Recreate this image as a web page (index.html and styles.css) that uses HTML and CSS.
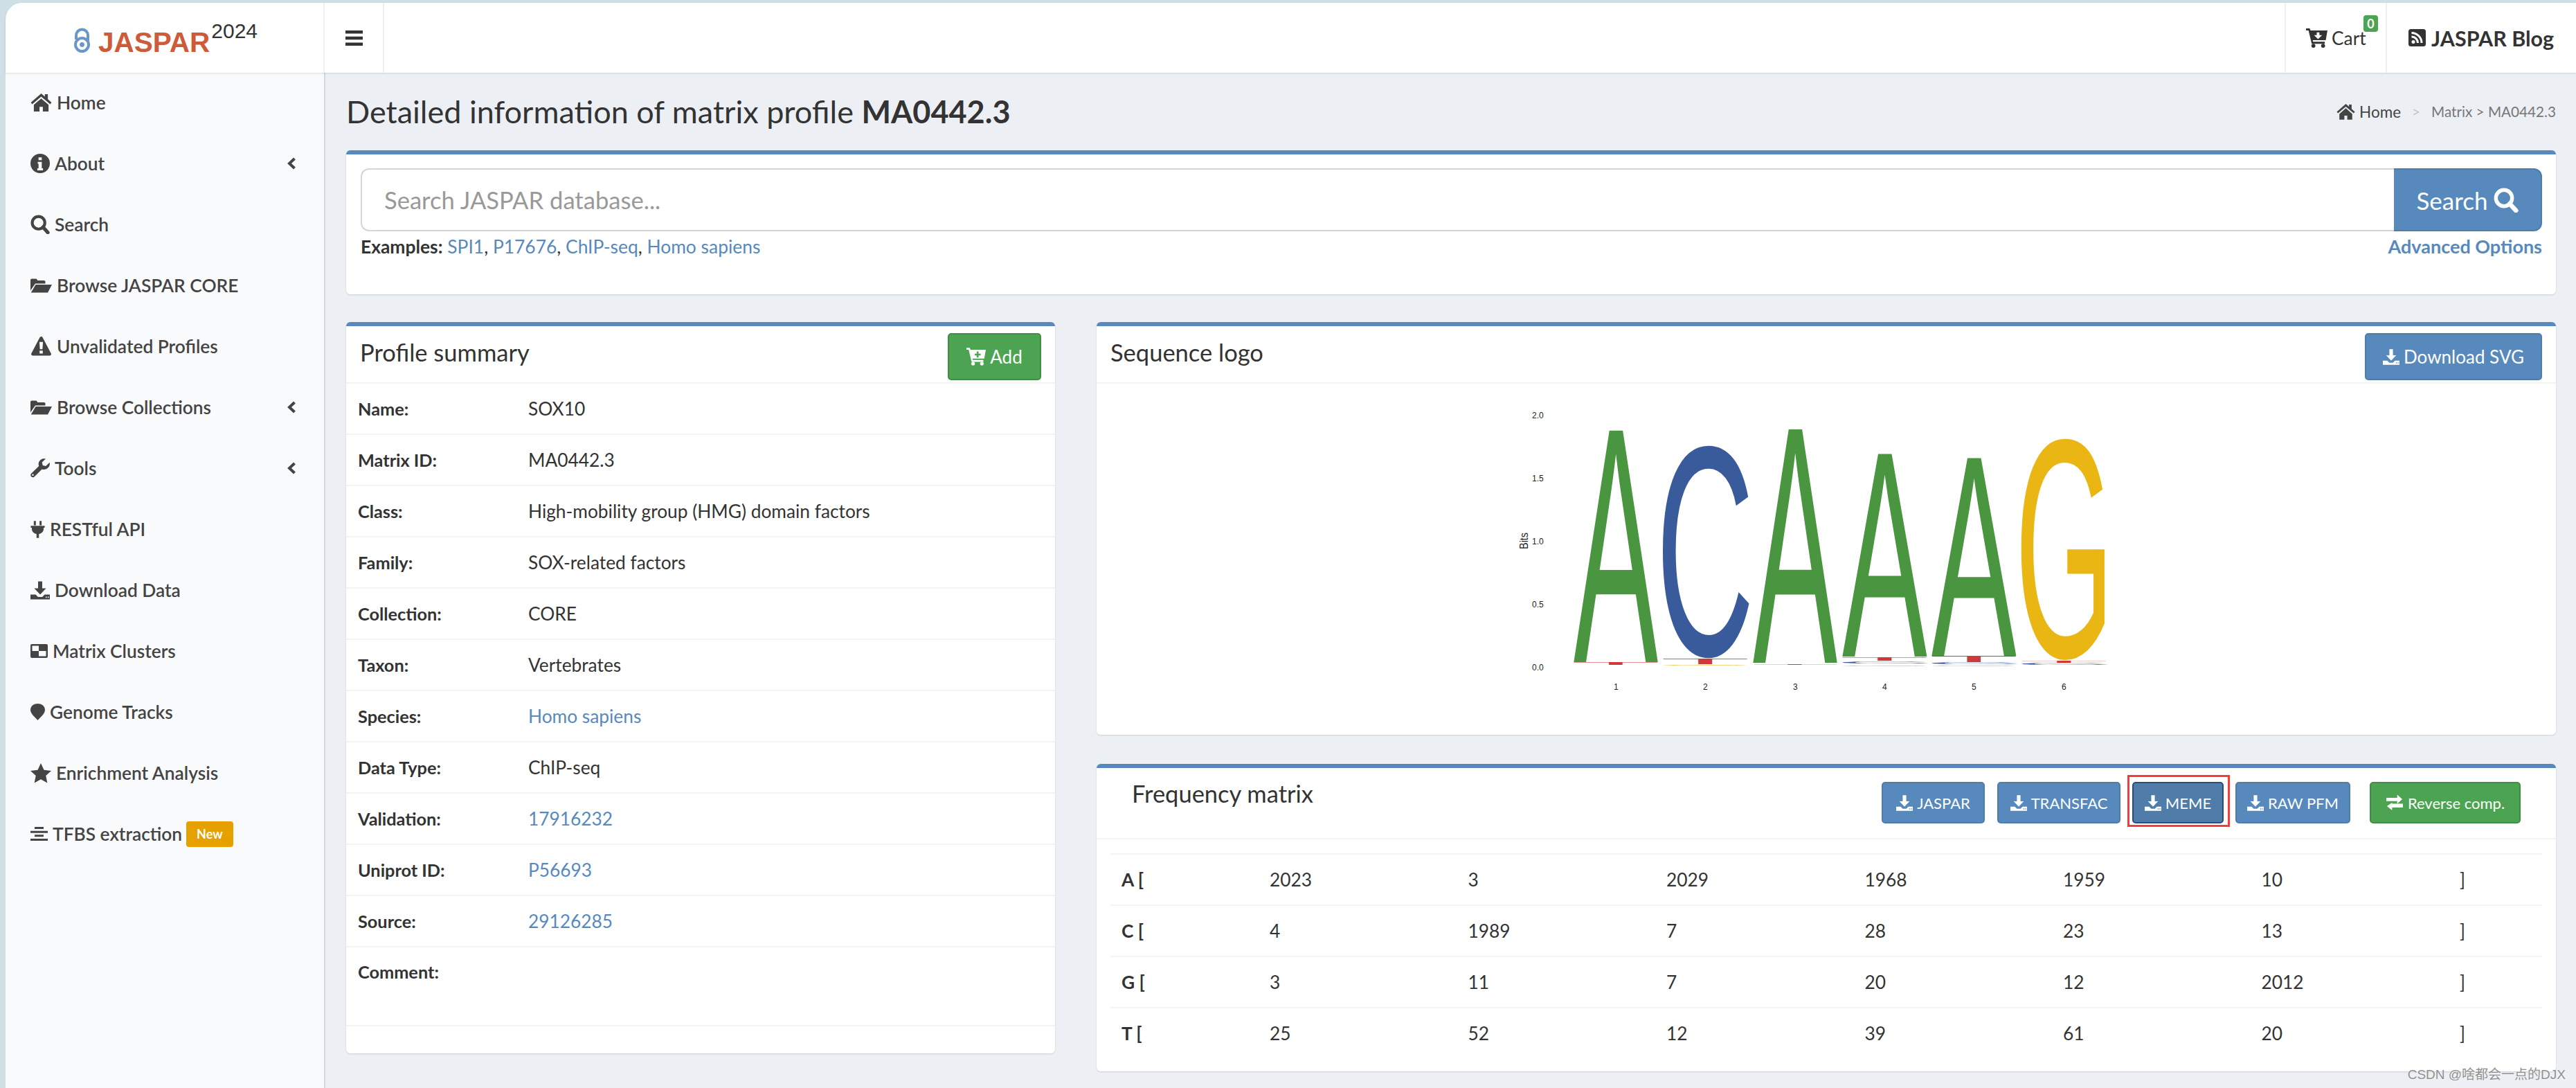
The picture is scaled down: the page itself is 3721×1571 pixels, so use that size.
FILE: index.html
```html
<!DOCTYPE html>
<html lang="en">
<head>
<meta charset="utf-8">
<title>JASPAR - MA0442.3</title>
<link rel="stylesheet" href="styles.css">
</head>
<body>
<svg class="sprite" xmlns="http://www.w3.org/2000/svg">
  <symbol id="i-home" viewBox="0 0 32 28"><path d="M16 1 L0.5 14.5 2.6 17 16 5.6 29.4 17 31.5 14.5 26 9.7V2h-4.5v3.8z M5 18v10h8.500v-7h5v7H27V18L16 8.500z"/></symbol>
  <symbol id="i-info" viewBox="0 0 24 24"><path fill-rule="evenodd" d="M12 0a12 12 0 1 0 0 24 12 12 0 0 0 0-24z M10 4.500h4v3.500h-4z M9 10h5v8h1.500v2.500h-7V18H10v-5.500H9z"/></symbol>
  <symbol id="i-search" viewBox="0 0 24 24"><circle cx="10" cy="10" r="7.800" fill="none" stroke="currentColor" stroke-width="3.600"/><path d="M15.500 15.500 L21.500 22" fill="none" stroke="currentColor" stroke-width="4.400" stroke-linecap="round"/></symbol>
  <symbol id="i-folder" viewBox="0 0 31 22"><path d="M0 3a2 2 0 0 1 2-2h6.500l2 2.500h9a2 2 0 0 1 2 2V8H7L0 18z M7.500 9.500H31L25 21H0.800z"/></symbol>
  <symbol id="i-warn" viewBox="0 0 28 27"><path fill-rule="evenodd" d="M14 0c.9 0 1.600.4 2 1.200l11.700 22.300c.7 1.400-.3 3-2 3H2.300c-1.700 0-2.700-1.600-2-3L12 1.200C12.400.4 13.100 0 14 0z M11.500 7.500h5l-.7 10h-3.600z M11.800 19.500h4.400v4.200h-4.400z"/></symbol>
  <symbol id="i-wrench" viewBox="0 0 29 28"><path fill-rule="evenodd" d="M28.600 5.500 l-5.600 5.400-4.600-1.100-1.100-4.600L22.700 0c-4.300-1.100-8.800 1.100-10.200 5.300-.7 2-.5 3.900.1 5.600L1.200 22a3.400 3.400 0 0 0 4.800 4.800L17.200 15.500c1.700.7 3.800.8 5.700.1 4.300-1.600 6.900-5.800 5.700-10.100z M3.600 25.400a1.300 1.300 0 1 1 0-2.600 1.300 1.300 0 0 1 0 2.600z"/></symbol>
  <symbol id="i-plug" viewBox="0 0 24 28"><path d="M5.500 0h3.400v7H5.500z M15 0h3.400v7H15z M0.500 8h23v3h-1.800v2c0 5-3.700 7.600-7.700 8.400V28h-4v-6.600C6 20.600 2.300 18 2.300 13v-2H.5z"/></symbol>
  <symbol id="i-down" viewBox="0 0 28 26"><path fill-rule="evenodd" d="M11 0h6v10h5.500L14 19 5.500 10H11z M0 19h7.500l3.500 3.500h6L20.500 19H28v7H0z M22 22h1.500v1.800H22z M25 22h1.500v1.800H25z"/></symbol>
  <symbol id="i-check" viewBox="0 0 25 20"><path fill-rule="evenodd" d="M2 0h21a2 2 0 0 1 2 2v16a2 2 0 0 1-2 2H2a2 2 0 0 1-2-2V2a2 2 0 0 1 2-2z M2.500 2.500V10H12V2.500z M12 10v7.500h10.500V10z"/></symbol>
  <symbol id="i-pin" viewBox="0 0 22 25"><path d="M11 0c6.200 0 11 3.900 11 9.500C22 15 14.500 21 11 25 7.500 21 0 15 0 9.500 0 3.900 4.800 0 11 0z"/></symbol>
  <symbol id="i-star" viewBox="0 0 26 25"><path d="M13 0l3.900 8.300 9.100 1.100-6.700 6.200 1.800 9L13 20.100 4.900 24.600l1.800-9L0 9.400l9.100-1.100z"/></symbol>
  <symbol id="i-align" viewBox="0 0 25 20"><path d="M6 0h13v3H6z M0 5.700h25v3H0z M6 11.300h13v3H6z M0 17h25v3H0z"/></symbol>
  <symbol id="i-bars" viewBox="0 0 25 22"><path d="M0 0h25v4.500H0z M0 8.800h25v4.500H0z M0 17.500h25V22H0z"/></symbol>
  <symbol id="i-left" viewBox="0 0 13 18"><path d="M10.500 2 L3 9 10.500 16" fill="none" stroke="currentColor" stroke-width="4"/></symbol>
  <symbol id="i-cart-down" viewBox="0 0 32 29"><path fill-rule="evenodd" d="M0 0h5.500l1.200 3H32l-2.500 14.500H10l.6 2.500H28v3H8.500L3.700 3H0z M16 6v4h-4l6 6 6-6h-4V6z"/><circle cx="11" cy="26" r="3"/><circle cx="25.500" cy="26" r="3"/></symbol>
  <symbol id="i-cart-plus" viewBox="0 0 32 29"><path fill-rule="evenodd" d="M0 0h5.500l1.200 3H32l-2.500 14.500H10l.6 2.500H28v3H8.500L3.700 3H0z M17 6v3.500h-3.500v3H17V16h3v-3.500h3.500v-3H20V6z"/><circle cx="11" cy="26" r="3"/><circle cx="25.500" cy="26" r="3"/></symbol>
  <symbol id="i-rss" viewBox="0 0 25 25"><rect width="25" height="25" rx="3.500" fill="currentColor"/><circle cx="7" cy="18.500" r="2.500" fill="#fff"/><path d="M4.500 11a9 9 0 0 1 9 9 M4.500 5.500a14.500 14.500 0 0 1 14.500 14.500" fill="none" stroke="#fff" stroke-width="3"/></symbol>
  <symbol id="i-swap" viewBox="0 0 26 26"><path d="M0 6.500h17V1.500l8 7-8 7v-4H0z M26 15.500H9v-1.500L1 19.500l8 6.500v-4.500h17z" transform="translate(0 -1)"/></symbol>
</svg>

<div class="app">
  <header class="topbar">
    <a class="brand">
      <svg class="brand-lock" viewBox="0 0 23 36"><path d="M3 17V11a8.500 8.500 0 0 1 17 0v8" fill="none" stroke="#6a97c8" stroke-width="4"/><circle cx="11.500" cy="24.500" r="9.500" fill="none" stroke="#6a97c8" stroke-width="4"/><circle cx="11.500" cy="24.500" r="3.400" fill="#6a97c8"/></svg>
      <span class="brand-name">JASPAR</span><sup class="brand-year">2024</sup>
    </a>
    <a class="toggle"><svg class="ic-bars"><use href="#i-bars"/></svg></a>
    <div class="top-spacer"></div>
    <a class="top-cart">
      <svg class="ic-cart"><use href="#i-cart-down"/></svg>
      <span>Cart</span>
      <span class="cart-badge">0</span>
    </a>
    <a class="top-blog"><svg class="ic-rss"><use href="#i-rss"/></svg><span>JASPAR Blog</span></a>
  </header>

  <div class="shell">
    <nav class="sidebar">
      <a class="nav-item"><svg class="ic ic-home"><use href="#i-home"/></svg><span>Home</span></a>
      <a class="nav-item"><svg class="ic ic-info"><use href="#i-info"/></svg><span>About</span><svg class="chev"><use href="#i-left"/></svg></a>
      <a class="nav-item"><svg class="ic ic-search"><use href="#i-search"/></svg><span>Search</span></a>
      <a class="nav-item"><svg class="ic ic-folder"><use href="#i-folder"/></svg><span>Browse JASPAR CORE</span></a>
      <a class="nav-item"><svg class="ic ic-warn"><use href="#i-warn"/></svg><span>Unvalidated Profiles</span></a>
      <a class="nav-item"><svg class="ic ic-folder"><use href="#i-folder"/></svg><span>Browse Collections</span><svg class="chev"><use href="#i-left"/></svg></a>
      <a class="nav-item"><svg class="ic ic-wrench"><use href="#i-wrench"/></svg><span>Tools</span><svg class="chev"><use href="#i-left"/></svg></a>
      <a class="nav-item"><svg class="ic ic-plug"><use href="#i-plug"/></svg><span>RESTful API</span></a>
      <a class="nav-item"><svg class="ic ic-down"><use href="#i-down"/></svg><span>Download Data</span></a>
      <a class="nav-item"><svg class="ic ic-check"><use href="#i-check"/></svg><span>Matrix Clusters</span></a>
      <a class="nav-item"><svg class="ic ic-pin"><use href="#i-pin"/></svg><span>Genome Tracks</span></a>
      <a class="nav-item"><svg class="ic ic-star"><use href="#i-star"/></svg><span>Enrichment Analysis</span></a>
      <a class="nav-item"><svg class="ic ic-align"><use href="#i-align"/></svg><span>TFBS extraction</span><span class="new-badge">New</span></a>
    </nav>

    <main class="content">
      <div class="page-head">
        <h1 class="page-title">Detailed information of matrix profile <strong>MA0442.3</strong></h1>
        <div class="crumbs">
          <svg class="ic-crumb"><use href="#i-home"/></svg><span class="crumb-home">Home</span>
          <span class="crumb-sep">&gt;</span>
          <span class="crumb-cur">Matrix &gt; MA0442.3</span>
        </div>
      </div>

      <section class="card search-card">
        <div class="search-group">
          <input class="search-input" type="text" placeholder="Search JASPAR database...">
          <a class="search-btn">Search<svg class="ic-sbtn"><use href="#i-search"/></svg></a>
        </div>
        <div class="search-foot">
          <div class="examples"><strong>Examples:</strong> <a>SPI1</a>, <a>P17676</a>, <a>ChIP-seq</a>, <a>Homo sapiens</a></div>
          <a class="advanced">Advanced Options</a>
        </div>
      </section>

      <div class="columns">
        <section class="card profile-card">
          <div class="card-head">
            <h3 class="card-title">Profile summary</h3>
            <a class="btn btn-green btn-add"><svg class="ic-bcart"><use href="#i-cart-plus"/></svg>Add</a>
          </div>
          <table class="info-table">
            <tr><th>Name:</th><td>SOX10</td></tr>
            <tr><th>Matrix ID:</th><td>MA0442.3</td></tr>
            <tr><th>Class:</th><td>High-mobility group (HMG) domain factors</td></tr>
            <tr><th>Family:</th><td>SOX-related factors</td></tr>
            <tr><th>Collection:</th><td>CORE</td></tr>
            <tr><th>Taxon:</th><td>Vertebrates</td></tr>
            <tr><th>Species:</th><td><a>Homo sapiens</a></td></tr>
            <tr><th>Data Type:</th><td>ChIP-seq</td></tr>
            <tr><th>Validation:</th><td><a>17916232</a></td></tr>
            <tr><th>Uniprot ID:</th><td><a>P56693</a></td></tr>
            <tr><th>Source:</th><td><a>29126285</a></td></tr>
            <tr class="row-comment"><th>Comment:</th><td></td></tr>
          </table>
        </section>

        <div class="right-col">
          <section class="card logo-card">
            <div class="card-head">
              <h3 class="card-title">Sequence logo</h3>
              <a class="btn btn-blue btn-svg"><svg class="ic-bdown"><use href="#i-down"/></svg>Download SVG</a>
            </div>
            <svg class="seqlogo" viewBox="1584 554 2108 507" xmlns="http://www.w3.org/2000/svg">
              <g class="ax">
                <text x="2213" y="603.500">2.0</text>
                <text x="2213" y="694.500">1.5</text>
                <text x="2213" y="785.500">1.0</text>
                <text x="2213" y="876.500">0.5</text>
                <text x="2213" y="967.500">0.0</text>
                <text class="ax-bits" transform="translate(2207 793) rotate(-90) scale(.85 1)">Bits</text>
                <text x="2331" y="996">1</text>
                <text x="2460" y="996">2</text>
                <text x="2590" y="996">3</text>
                <text x="2719" y="996">4</text>
                <text x="2848" y="996">5</text>
                <text x="2978" y="996">6</text>
              </g>
              <g class="lt">
                <text class="c-a" transform="translate(2273 956) scale(1.830 4.860)">A</text>
                <text class="c-c" transform="translate(2392 946) scale(1.965 4.330)">C</text>
                <text class="c-a" transform="translate(2532 957) scale(1.830 4.900)">A</text>
                <text class="c-a" transform="translate(2661 948) scale(1.840 4.250)">A</text>
                <text class="c-a" transform="translate(2790 947) scale(1.840 4.150)">A</text>
                <text class="c-g" transform="translate(2910.500 948.600) scale(1.840 4.510)">G</text>
                <text class="c-t" transform="translate(2269 960) scale(2.140 .045)">T</text>
                <text class="c-t" transform="translate(2398 959) scale(2.140 .1)">T</text>
                <text class="c-t" transform="translate(2528 959.500) scale(2.140 .025)">T</text>
                <text class="c-t" transform="translate(2657 954) scale(2.140 .08)">T</text>
                <text class="c-t" transform="translate(2786 956) scale(2.140 .125)">T</text>
                <text class="c-t" transform="translate(2916 957) scale(2.140 .04)">T</text>
                <text class="c-c" transform="translate(2651 958) scale(1.965 .04)">C</text>
                <text class="c-c" transform="translate(2780 959) scale(1.965 .03)">C</text>
                <text class="c-g" transform="translate(2652 961.500) scale(1.840 .02)">G</text>
                <text class="c-g" transform="translate(2781 961.500) scale(1.840 .015)">G</text>
                <text class="c-g" transform="translate(2393 961) scale(1.840 .015)">G</text>
                <text class="c-c" transform="translate(2910 960) scale(1.965 .03)">C</text>
              </g>
            </svg>
          </section>

          <section class="card matrix-card">
            <div class="card-head matrix-head">
              <h3 class="card-title matrix-title">Frequency matrix</h3>
              <div class="btn-row">
                <a class="btn btn-blue btn-sm b-jaspar"><svg class="ic-bdown"><use href="#i-down"/></svg>JASPAR</a>
                <a class="btn btn-blue btn-sm b-transfac"><svg class="ic-bdown"><use href="#i-down"/></svg>TRANSFAC</a>
                <a class="btn btn-blue btn-sm b-meme"><svg class="ic-bdown"><use href="#i-down"/></svg>MEME<span class="red-box"></span></a>
                <a class="btn btn-blue btn-sm b-raw"><svg class="ic-bdown"><use href="#i-down"/></svg>RAW PFM</a>
                <a class="btn btn-green btn-sm b-rev"><svg class="ic-bswap"><use href="#i-swap"/></svg>Reverse comp.</a>
              </div>
            </div>
            <div class="matrix-body">
              <table class="matrix">
                <colgroup><col class="col-label"><col class="col-n"><col class="col-n"><col class="col-n"><col class="col-n"><col class="col-n"><col class="col-n"><col></colgroup>
                <tr><th>A [</th><td>2023</td><td>3</td><td>2029</td><td>1968</td><td>1959</td><td>10</td><th class="close">]</th></tr>
                <tr><th>C [</th><td>4</td><td>1989</td><td>7</td><td>28</td><td>23</td><td>13</td><th class="close">]</th></tr>
                <tr><th>G [</th><td>3</td><td>11</td><td>7</td><td>20</td><td>12</td><td>2012</td><th class="close">]</th></tr>
                <tr><th>T [</th><td>25</td><td>52</td><td>12</td><td>39</td><td>61</td><td>20</td><th class="close">]</th></tr>
              </table>
            </div>
          </section>
        </div>
      </div>
    </main>
  </div>
  <div class="watermark">CSDN @啥都会一点的DJX</div>
</div>
</body>
</html>
```

FILE: styles.css
```css
* { box-sizing: border-box; }
html, body { margin: 0; height: 100%; }
body {
  font-family: "Lato", "Noto Sans", sans-serif;
  font-size: 26.300px;
  color: #333;
  background: #cfdfe6;
  overflow: hidden;
}
a { color: #5789bc; text-decoration: none; }
h1, h3 { margin: 0; font-weight: 400; }
.sprite { display: none; }
svg { fill: currentColor; flex: none; }

.app {
  position: relative;
  height: 1571px;
  padding: 4px 0 0 8px;
  display: flex;
  flex-direction: column;
}

/* top bar */
.topbar {
  height: 101px;
  flex: none;
  display: flex;
  background: #fff;
  border-top-left-radius: 24px;
  box-shadow: 0 1px 3px rgba(0,0,0,.12);
  position: relative;
  z-index: 1;
}
.brand {
  width: 459px;
  flex: none;
  display: flex;
  align-items: flex-start;
  padding: 36px 0 0 99px;
  font-family: "Liberation Sans", Arial, sans-serif;
}
.brand-lock { width: 23px; height: 36px; margin-right: 12px; }
.brand-name { font-size: 40.500px; font-weight: 700; color: #cd5b3a; line-height: 40px; margin-top: 1px; }
.brand-year { font-size: 30px; color: #333; line-height: 30px; margin: -10px 0 0 2px; vertical-align: baseline; }
.toggle {
  width: 88px;
  flex: none;
  display: flex;
  align-items: center;
  justify-content: center;
  color: #333;
  border-left: 2px solid #f0f0f0;
  border-right: 2px solid #f0f0f0;
}
.ic-bars { width: 25px; height: 22px; }
.top-spacer { flex: 1; }
.top-cart {
  position: relative;
  width: 148px;
  flex: none;
  display: flex;
  align-items: center;
  color: #333;
  padding-left: 29px;
  gap: 6px;
  border-left: 2px solid #f0f0f0;
  border-right: 2px solid #f0f0f0;
}
.ic-cart { width: 31px; height: 28px; }
.cart-badge {
  position: absolute;
  left: 112px;
  top: 18px;
  width: 21px;
  height: 24px;
  border-radius: 4px;
  background: #4ca452;
  color: #fff;
  font-size: 18px;
  font-weight: 700;
  line-height: 24px;
  text-align: center;
}
.top-blog {
  flex: none;
  width: 273px;
  display: flex;
  align-items: center;
  gap: 8px;
  padding-left: 31px;
  color: #333;
  font-weight: 700;
  font-size: 30.500px;
}
.ic-rss { width: 25px; height: 25px; }

/* shell */
.shell { flex: 1; min-height: 0; display: flex; background: #ecf0f5; }
.sidebar {
  width: 462px;
  flex: none;
  background: #f9fafc;
  border-right: 2px solid #d2d6de;
}
.nav-item {
  height: 88px;
  display: flex;
  align-items: center;
  padding: 0 40px 0 36px;
  color: #444;
  font-weight: 600;
  font-size: 26.300px;
}
.nav-item:first-child { height: 87px; padding-bottom: 2px; }
.nav-item span { margin-left: 7px; }
.ic { fill: #444; }
.ic-home { width: 31px; height: 27px; }
.ic-info { width: 28px; height: 28px; }
.ic-search { width: 28px; height: 28px; }
.ic-folder { width: 31px; height: 23px; }
.ic-warn { width: 31px; height: 28px; }
.ic-wrench { width: 28px; height: 28px; }
.ic-plug { width: 21px; height: 27px; }
.ic-down { width: 28px; height: 27px; }
.ic-check { width: 25px; height: 24px; }
.ic-pin { width: 21px; height: 28px; }
.ic-star { width: 30px; height: 29px; }
.ic-align { width: 25px; height: 24px; }
.chev { width: 13px; height: 18px; margin-left: auto; fill: #444; color: #444; }
.nav-item .new-badge {
  background: #e6a100;
  color: #fff;
  border-radius: 4px;
  font-size: 18px;
  font-weight: 700;
  line-height: 37px;
  height: 37px;
  padding: 0 15px;
  margin-left: 6px;
}

/* content */
.content { flex: 1; min-width: 0; padding: 0 29px 0 30px; }
.page-head {
  height: 112px;
  display: flex;
  align-items: center;
  justify-content: space-between;
}
.page-title { font-size: 45px; font-weight: 400; }
.crumbs { display: flex; align-items: center; font-size: 20.700px; color: #444; }
.crumb-home { font-size: 22.500px; }
.ic-crumb { width: 27px; height: 24px; margin-right: 6px; }
.crumb-sep { color: #c4c4c4; margin: 0 16px; }
.crumb-cur { color: #777; }

.card {
  background: #fff;
  border-top: 6px solid #5789bc;
  border-radius: 6px;
  box-shadow: 0 1px 2px rgba(0,0,0,.14);
}
.search-card { height: 208px; padding: 20px 20px 0 21px; margin-bottom: 40px; }
.search-group { display: flex; height: 91px; }
.search-input {
  flex: 1;
  min-width: 0;
  height: 100%;
  border: 2px solid #d2d6de;
  border-right: 0;
  border-radius: 12px 0 0 12px;
  padding: 0 32px;
  font: 34.600px "Lato", sans-serif;
  color: #333;
  outline: none;
}
.search-input::placeholder { color: #999; opacity: 1; }
.search-btn {
  width: 214px;
  flex: none;
  background: #5789bc;
  border: 2px solid #4f7ca9;
  border-left: 0;
  border-radius: 0 12px 12px 0;
  color: #fff;
  font-size: 35px;
  display: flex;
  align-items: center;
  justify-content: center;
  gap: 8px;
}
.ic-sbtn { width: 36px; height: 36px; }
.search-foot { display: flex; justify-content: space-between; margin-top: 6px; }
.examples { font-size: 26.400px; line-height: 32px; color: #333; }
.advanced { font-size: 27px; line-height: 32px; font-weight: 700; }

.columns { display: grid; grid-template-columns: 1024px 1fr; gap: 60px; align-items: start; }
.right-col { display: flex; flex-direction: column; gap: 42px; }

.card-head {
  height: 83px;
  display: flex;
  justify-content: space-between;
  align-items: flex-start;
  padding: 10px 20px 0;
  border-bottom: 2px solid #f4f4f4;
}
.card-title { font-size: 34.500px; line-height: 56px; }

.btn {
  display: flex;
  align-items: center;
  justify-content: center;
  color: #fff;
  border-radius: 5px;
  font-size: 26px;
  height: 68px;
  gap: 6px;
  flex: none;
}
.btn-blue { background: #5789bc; border: 2px solid #4f7ca9; }
.btn-green { background: #4ca452; border: 2px solid #408d46; }
.btn-add { width: 135px; }
.btn-svg { width: 256px; }
.btn-sm { height: 60px; font-size: 22px; gap: 6px; position: relative; }
.ic-bdown { width: 24px; height: 25px; }
.ic-bcart { width: 28px; height: 28px; }
.ic-bswap { width: 26px; height: 24px; }

.info-table { width: 100%; border-collapse: separate; border-spacing: 0; }
.info-table th, .info-table td {
  height: 74px;
  padding: 0;
  border-bottom: 2px solid #f4f4f4;
  font-weight: 400;
  text-align: left;
}
.info-table th { width: 263px; padding-left: 17px; font-weight: 700; font-size: 25.300px; }
.profile-card { height: 1056px; }
.row-comment th, .row-comment td { height: 114px; vertical-align: top; padding-top: 20px; }

.logo-card { height: 596px; }
.seqlogo { display: block; width: 2108px; height: 507px; }
.ax text { font: 12px "Liberation Sans", Arial, sans-serif; fill: #222; }
.ax .ax-bits { font-size: 17px; }
.lt text { font: 100px "Liberation Sans", Arial, sans-serif; }
.c-a { fill: #4a9640; }
.c-c { fill: #3a5b9b; }
.c-g { fill: #e9b613; }
.c-t { fill: #cc3a3a; }

.matrix-card { height: 444px; }
.matrix-head { height: 103px; padding: 20px 51px 0; }
.matrix-title { line-height: 50px; margin-top: -8px; }
.btn-row { display: flex; }
.b-jaspar { width: 149px; margin-right: 18px; }
.b-transfac { width: 178px; margin-right: 17px; }
.b-meme { width: 132px; margin-right: 17px; background: #4f7ca8; border-color: #2d4a78; }
.b-raw { width: 166px; margin-right: 28px; }
.b-rev { width: 218px; }
.red-box {
  position: absolute;
  left: -9px;
  right: -11px;
  top: -12px;
  bottom: -7px;
  border: 3px solid #f63b3b;
}
.matrix-body { padding: 20px 20px 0 20px; }
.matrix { width: 100%; table-layout: fixed; border-collapse: separate; border-spacing: 0; }
.matrix th, .matrix td {
  height: 74px;
  padding: 0;
  border-top: 2px solid #f4f4f4;
  text-align: left;
  font-weight: 400;
}
.matrix th { font-weight: 700; padding-left: 16px; }
.matrix th.close { padding-left: 0; font-weight: 400; }
.col-label { width: 230px; }
.col-n { width: 286.500px; }

.watermark {
  position: absolute;
  right: 15px;
  bottom: 8px;
  font: 19px "Liberation Sans", "Noto Sans CJK SC", sans-serif;
  color: #8f8f8f;
  text-shadow: 0 0 2px #fff;
}
```
